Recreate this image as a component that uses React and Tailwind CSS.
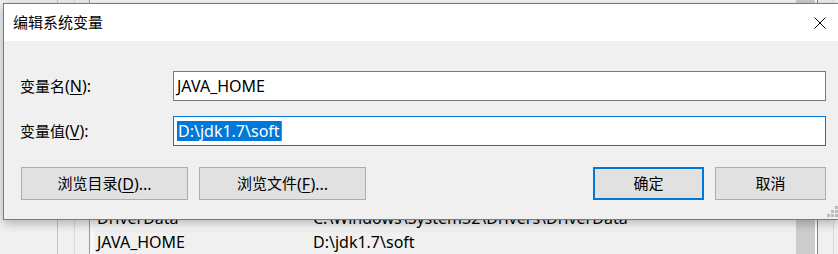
import React from "react";

const FONT = { fontFamily: '"Noto Sans", "Noto Sans CJK SC", sans-serif' };

function Btn({ children, primary, w }) {
  return (
    <div
      className={
        "flex items-center justify-center h-[33px] bg-[#e1e1e1] text-[15px] text-black " +
        (primary ? "border-2 border-[#0078d7]" : "border border-[#adadad]")
      }
      style={{ width: w }}
    >
      {children}
    </div>
  );
}

export default function App() {
  return (
    <div className="relative w-[838px] h-[254px] overflow-hidden bg-[#f0f0f0]" style={FONT}>
      {/* background window */}
      <div className="flex h-[254px]">
        <div className="w-[57px] bg-[#f0f0f0]" />
        <div className="w-px bg-[#c4c4c4]" />
        <div className="w-[16px] bg-[#f0f0f0]" />
        <div className="w-px bg-[#dadada]" />
        <div className="w-[14px] bg-[#f0f0f0]" />
        <div className="w-px bg-[#9a9a9a]" />
        <div className="flex-1 flex flex-col bg-[#f7f7f7] pt-[206px] pl-[5px] text-[16px] text-black">
          <div className="flex h-[24px] items-center pl-[2px]">
            <span className="w-[216px]">DriverData</span>
            <span>C:\Windows\System32\Drivers\DriverData</span>
          </div>
          <div className="flex h-[24px] items-center pl-[2px] bg-[#f0f0f0]">
            <span className="w-[216px]">JAVA_HOME</span>
            <span>D:\jdk1.7\soft</span>
          </div>
        </div>
        <div className="w-[19px] bg-[#cdcdcd]" />
        <div className="w-[2px] bg-white" />
        <div className="w-px bg-[#828282]" />
        <div className="w-[15px] bg-[#f0f0f0]" />
        <div className="w-px bg-[#d9d9d9]" />
        <div className="w-[4px] bg-[#f0f0f0]" />
      </div>

      {/* dialog window */}
      <div className="absolute left-[3px] top-[3px] right-0 h-[217px] border-l border-t border-b border-[#7a7a7a] bg-[#f0f0f0] shadow-[0_3px_10px_rgba(0,0,0,0.28)] flex flex-col">
        <div className="h-[37px] bg-white flex items-center justify-between pl-[9px] pr-[12px]">
          <span className="text-[15px] text-black" style={{ fontFamily: '"Noto Sans CJK SC", sans-serif' }}>
            编辑系统变量
          </span>
          <svg width="12" height="12" viewBox="0 0 12 12">
            <path d="M0.5 0.5 L11.5 11.5 M11.5 0.5 L0.5 11.5" stroke="#000" strokeWidth="1" fill="none" />
          </svg>
        </div>

        <div className="flex-1 flex flex-col pt-[30px] pl-[16px] pr-[12px] relative">
          <div className="flex items-center h-[30px]">
            <span className="w-[153px] text-[15px] text-black">
              变量名<span className="text-[16px]">(<span className="underline underline-offset-2">N</span>):</span>
            </span>
            <div className="flex-1 h-[30px] bg-white border border-[#7a7a7a] flex items-center pl-[3px] text-[16px] text-black">
              JAVA_HOME
            </div>
          </div>

          <div className="flex items-center h-[30px] mt-[15px]">
            <span className="w-[153px] text-[15px] text-black">
              变量值<span className="text-[16px]">(<span className="underline underline-offset-2">V</span>):</span>
            </span>
            <div className="flex-1 h-[30px] bg-white border border-[#0078d7] flex items-center pl-[3px] text-[16px]">
              <span className="bg-[#0078d7] text-white h-[20px] leading-[20px] px-px">D:\jdk1.7\soft</span>
              <span className="w-px h-[20px] bg-[#d2691e]" />
            </div>
          </div>

          <div className="flex items-center mt-[21px] pl-px">
            <Btn w={167}>
              浏览目录<span className="text-[16px]">(<span className="underline underline-offset-2">D</span>)...</span>
            </Btn>
            <div className="w-[11px]" />
            <Btn w={167}>
              浏览文件<span className="text-[16px]">(<span className="underline underline-offset-2">F</span>)...</span>
            </Btn>
            <div className="flex-1" />
            <Btn w={111} primary>确定</Btn>
            <div className="w-[11px]" />
            <Btn w={111}>取消</Btn>
          </div>

          <svg className="absolute right-0 bottom-[2px]" width="11" height="11" viewBox="0 0 11 11">
            <rect x="8" y="0" width="3" height="3" fill="#bcbcbc" />
            <rect x="4" y="4" width="3" height="3" fill="#bcbcbc" />
            <rect x="8" y="4" width="3" height="3" fill="#bcbcbc" />
            <rect x="0" y="8" width="3" height="3" fill="#bcbcbc" />
            <rect x="4" y="8" width="3" height="3" fill="#bcbcbc" />
            <rect x="8" y="8" width="3" height="3" fill="#bcbcbc" />
          </svg>
        </div>
      </div>
    </div>
  );
}
